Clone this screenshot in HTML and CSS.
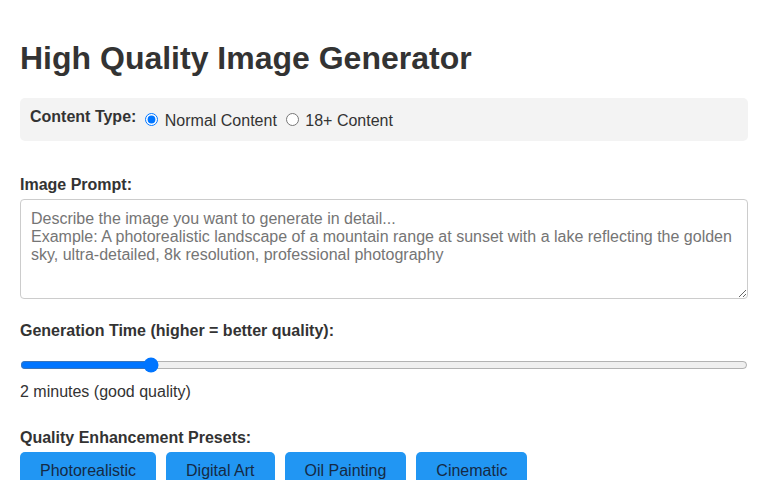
FILE: index.html
```html
<!DOCTYPE html>
<html lang="en">
<head>
    <meta charset="UTF-8">
    <meta name="viewport" content="width=device-width, initial-scale=1.0">
    <title>High Quality Image Generator</title>
    <link rel="stylesheet" href="styles.css">
</head>
<body>
    <h1>High Quality Image Generator</h1>

    <div class="content-type">
        <label class="field-label">Content Type:</label>
        <label class="radio-option"><input type="radio" name="contentType" value="normal" checked> Normal Content</label>
        <label class="radio-option"><input type="radio" name="contentType" value="adult"> 18+ Content</label>
    </div>

    <div class="form-group">
        <label class="field-label" for="prompt">Image Prompt:</label>
        <textarea id="prompt" placeholder="Describe the image you want to generate in detail...&#10;Example: A photorealistic landscape of a mountain range at sunset with a lake reflecting the golden sky, ultra-detailed, 8k resolution, professional photography"></textarea>
    </div>

    <div class="form-group">
        <label class="field-label" for="genTime">Generation Time (higher = better quality):</label>
        <input type="range" id="genTime" min="1" max="30" value="6">
        <div id="timeValue">2 minutes (good quality)</div>
    </div>

    <div class="form-group">
        <label class="field-label">Quality Enhancement Presets:</label>
        <div class="presets">
            <button class="preset-btn">Photorealistic</button>
            <button class="preset-btn">Digital Art</button>
            <button class="preset-btn">Oil Painting</button>
            <button class="preset-btn">Cinematic</button>
        </div>
    </div>
</body>
</html>
```
FILE: styles.css
```css
body {
    margin: 0;
    padding: 20px;
    font-family: "Liberation Sans", Arial, sans-serif;
    font-size: 16px;
    color: #333;
}

h1 {
    font-size: 32px;
    margin: 20px 0 21px;
}

.field-label {
    display: block;
    font-weight: bold;
    margin-bottom: 5px;
}

.content-type {
    display: flex;
    align-items: center;
    background-color: #f3f3f3;
    border-radius: 5px;
    padding: 10px;
    margin-bottom: 35px;
}

.content-type .field-label {
    margin-right: 4px;
}

.content-type input[type="radio"] {
    margin: 3px 2px 0 5px;
}

.radio-option {
    margin-right: 4px;
}

.form-group {
    margin-bottom: 23px;
}

textarea {
    display: block;
    width: 100%;
    height: 100px;
    box-sizing: border-box;
    padding: 10px;
    border: 1px solid #ccc;
    border-radius: 4px;
    font-family: "Liberation Sans", Arial, sans-serif;
    font-size: 16px;
}

input[type="range"] {
    display: block;
    width: 100%;
    margin: 17px 0 10px;
}

#timeValue {
    margin-bottom: 28px;
}

.presets {
    display: flex;
    gap: 10px;
}

.preset-btn {
    background-color: #2196f3;
    color: #152a45;
    border: none;
    border-radius: 5px;
    padding: 10px 20px;
    font-family: "Liberation Sans", Arial, sans-serif;
    font-size: 16px;
}
```
